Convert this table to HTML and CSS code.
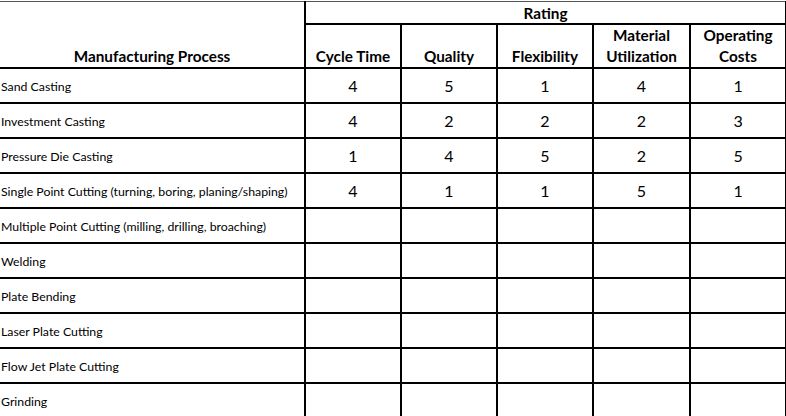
FILE: index.html
```html
<!DOCTYPE html>
<html>
<head>
<meta charset="utf-8">
<link rel="stylesheet" href="styles.css">
</head>
<body>
<table class="grid">
  <colgroup>
    <col class="c-proc">
    <col class="c-r">
    <col class="c-r">
    <col class="c-r">
    <col class="c-r4">
    <col class="c-r5">
  </colgroup>
  <thead>
    <tr class="h1">
      <th class="proc-head" rowspan="2">Manufacturing Process</th>
      <th class="rating" colspan="5">Rating</th>
    </tr>
    <tr class="h2">
      <th>Cycle Time</th>
      <th>Quality</th>
      <th>Flexibility</th>
      <th>Material<br>Utilization</th>
      <th>Operating<br>Costs</th>
    </tr>
  </thead>
  <tbody>
    <tr><td class="name">Sand Casting</td><td>4</td><td>5</td><td>1</td><td>4</td><td>1</td></tr>
    <tr><td class="name">Investment Casting</td><td>4</td><td>2</td><td>2</td><td>2</td><td>3</td></tr>
    <tr><td class="name">Pressure Die Casting</td><td>1</td><td>4</td><td>5</td><td>2</td><td>5</td></tr>
    <tr><td class="name">Single Point Cutting (turning, boring, planing/shaping)</td><td>4</td><td>1</td><td>1</td><td>5</td><td>1</td></tr>
    <tr><td class="name">Multiple Point Cutting (milling, drilling, broaching)</td><td></td><td></td><td></td><td></td><td></td></tr>
    <tr><td class="name">Welding</td><td></td><td></td><td></td><td></td><td></td></tr>
    <tr><td class="name">Plate Bending</td><td></td><td></td><td></td><td></td><td></td></tr>
    <tr><td class="name">Laser Plate Cutting</td><td></td><td></td><td></td><td></td><td></td></tr>
    <tr><td class="name">Flow Jet Plate Cutting</td><td></td><td></td><td></td><td></td><td></td></tr>
    <tr><td class="name">Grinding</td><td></td><td></td><td></td><td></td><td></td></tr>
  </tbody>
</table>
</body>
</html>
```
FILE: styles.css
```css
html, body {
  margin: 0;
  padding: 0;
  background: #ffffff;
}
body {
  padding-top: 1px;
  font-family: Lato, "Liberation Sans", sans-serif;
  color: #000;
  overflow: hidden;
}
.grid {
  border-collapse: collapse;
  table-layout: fixed;
  width: 786px;
}
.c-proc { width: 305px; }
.c-r { width: 96px; }
.c-r4 { width: 97px; }
.c-r5 { width: 96px; }

.grid th, .grid td {
  border: 2px solid #000;
  padding: 0;
  overflow: hidden;
  white-space: nowrap;
}
.grid tr > :first-child {
  border-left: none;
}
.h1 th {
  border-top: 1px solid #555;
}
.h1 {
  height: 22px;
}
.h2 {
  height: 44px;
}
.grid th {
  font-size: 15.3px;
  font-weight: 700;
  text-align: center;
  vertical-align: bottom;
  line-height: 21px;
  padding-bottom: 0;
}
.grid .rating {
  vertical-align: middle;
  line-height: 18px;
  padding-top: 2px;
}
.grid tbody tr {
  height: 35px;
}
.grid td {
  font-size: 16px;
  text-align: center;
  vertical-align: middle;
  padding-top: 1px;
}
.grid td.name {
  font-size: 12.3px;
  text-align: left;
  padding-left: 1px;
  padding-top: 2px;
}
```
